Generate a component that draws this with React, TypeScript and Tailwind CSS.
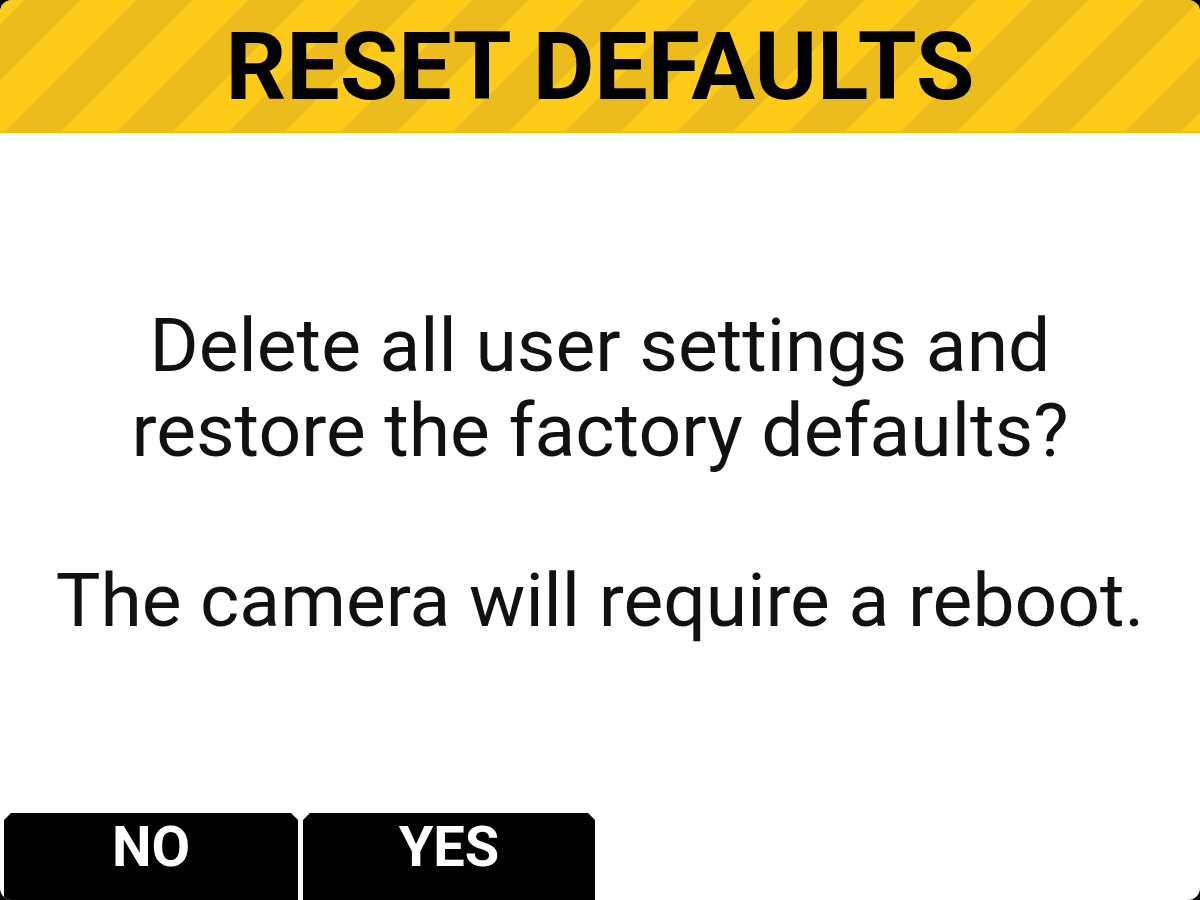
import React from "react";

export default function App() {
  return (
    <div className="w-[1200px] h-[900px] bg-black overflow-hidden" style={{ fontFamily: "Roboto, 'Liberation Sans', sans-serif" }}>
      <div className="w-full h-full bg-white rounded-[12px] overflow-hidden flex flex-col">
        <div
          className="h-[133px] shrink-0 flex items-center justify-center border-b-2 border-[#f6c000]"
          style={{
            backgroundImage:
              "repeating-linear-gradient(135deg, #fecb18 0px, #fecb18 17px, #ecbb1c 17px, #ecbb1c 56.6px, #fecb18 56.6px, #fecb18 79.2px)",
          }}
        >
          <h1 className="text-[95px] leading-none font-bold text-black pt-[1px]">RESET DEFAULTS</h1>
        </div>
        <div className="flex-1 flex items-center justify-center">
          <div className="text-center text-[75px] leading-[85px] text-[#111111]">
            <p>Delete all user settings and</p>
            <p>restore the factory defaults?</p>
            <p>&nbsp;</p>
            <p>The camera will require a reboot.</p>
          </div>
        </div>
        <div className="h-[87px] shrink-0 flex items-stretch gap-[5px] pl-[4px]">
          <button
            className="w-[294px] bg-black text-white font-bold text-[56px] leading-none flex items-start justify-center pt-[6px]"
            style={{ clipPath: "polygon(7px 0, calc(100% - 7px) 0, 100% 7px, 100% 100%, 0 100%, 0 7px)" }}
          >
            NO
          </button>
          <button
            className="w-[292px] bg-black text-white font-bold text-[56px] leading-none flex items-start justify-center pt-[6px]"
            style={{ clipPath: "polygon(7px 0, calc(100% - 7px) 0, 100% 7px, 100% 100%, 0 100%, 0 7px)" }}
          >
            YES
          </button>
        </div>
      </div>
    </div>
  );
}
